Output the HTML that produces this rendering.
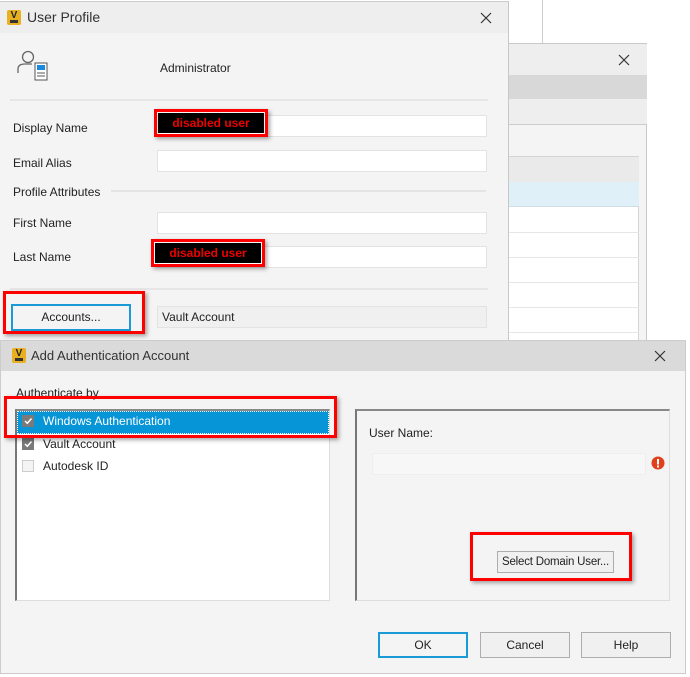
<!DOCTYPE html>
<html><head><meta charset="utf-8"><style>
*{margin:0;padding:0;box-sizing:border-box}
body{width:690px;height:677px;background:#fff;position:relative;overflow:hidden;font-family:"Liberation Sans",sans-serif;font-size:12px;color:#222}
.a{position:absolute}
.inp{position:absolute;background:#fff;border:1px solid #e3e3e3}
.red{position:absolute;border:3px solid #f00;box-shadow:2px 2px 4px rgba(0,0,0,.35)}
.blk{position:absolute;background:#000;color:#e00;font-weight:bold;font-size:12px;text-align:center;line-height:20px}
.btn{position:absolute;background:#f0f0f0;border:1px solid #adadad;text-align:center;font-size:12px;white-space:nowrap}
.logo{position:absolute;width:14px;height:15px;background:#e8b020;border-radius:2px;color:#222;font-size:10px;font-weight:bold;text-align:center;line-height:11px}
.logo:after{content:"";position:absolute;left:3px;bottom:2px;width:8px;height:3px;background:#333}
.x{position:absolute}
.cb{position:absolute;width:12px;height:12px;border:1px solid #ccc;background:#f4f4f4}
.cb.on{background:#7a7a7a;border-color:#7a7a7a}
</style></head><body>
<div class="a" style="left:542px;top:0;width:1px;height:44px;background:#ccc"></div>
<div class="a" style="left:500px;top:43px;width:147px;height:300px;background:#f4f4f4;border:1px solid #c8c8c8">
 <div class="a" style="left:0;top:0;width:146px;height:31px;background:#eee"></div>
 <svg class="x" style="left:117px;top:10px" width="12" height="12"><path d="M1 1L11 11M11 1L1 11" stroke="#333" stroke-width="1.2"/></svg>
 <div class="a" style="left:0;top:31px;width:146px;height:24px;background:#d8d8d8"></div>
 <div class="a" style="left:0;top:55px;width:146px;height:26px;background:#eee;border-bottom:1px solid #ccc"></div>
 <div class="a" style="left:0;top:112px;width:138px;height:190px;background:#fff;border:1px solid #d4d4d4">
  <div class="a" style="left:0;top:0;width:137px;height:25px;background:#eaeaea"></div>
  <div class="a" style="left:0;top:25px;width:137px;height:25px;background:#e0f0f8;border-bottom:1px solid #d0dde5"></div>
  <div class="a" style="left:0;top:75px;width:137px;height:1px;background:#e6e6e6"></div>
  <div class="a" style="left:0;top:100px;width:137px;height:1px;background:#e6e6e6"></div>
  <div class="a" style="left:0;top:125px;width:137px;height:1px;background:#e6e6e6"></div>
  <div class="a" style="left:0;top:150px;width:137px;height:1px;background:#e6e6e6"></div>
  <div class="a" style="left:0;top:175px;width:137px;height:1px;background:#e6e6e6"></div>
 </div>
</div>
<div class="a" style="left:0;top:1px;width:509px;height:345px;background:#f4f4f4;border-right:1px solid #c8c8c8;border-top:1px solid #ccc">
 <div class="a" style="left:0;top:0;width:508px;height:31px;background:#eee"></div>
</div>
<div class="logo" style="left:7px;top:10px">V</div>
<div class="a" style="left:27px;top:9px;font-size:14px;color:#333">User Profile</div>
<svg class="x" style="left:480px;top:12px" width="12" height="12"><path d="M1 1L11 11M11 1L1 11" stroke="#333" stroke-width="1.2"/></svg>
<svg class="a" style="left:17px;top:50px" width="32" height="32"><circle cx="11" cy="7" r="5.5" fill="none" stroke="#666" stroke-width="1.3"/><path d="M1 23 V19 Q1 14 8 14 H15" fill="none" stroke="#666" stroke-width="1.3"/><rect x="18" y="13" width="12" height="17" fill="#fff" stroke="#555"/><rect x="20" y="15" width="8" height="5" fill="#1a8ae0"/><path d="M20 23h8M20 26h8" stroke="#555"/></svg>
<div class="a" style="left:160px;top:61px;font-size:12px">Administrator</div>
<div class="a" style="left:10px;top:99px;width:478px;height:2px;background:#e6e6e6"></div>
<div class="a" style="left:13px;top:121px">Display Name</div>
<div class="inp" style="left:157px;top:115px;width:330px;height:22px"></div>
<div class="red" style="left:154px;top:109px;width:114px;height:28px"></div>
<div class="blk" style="left:158px;top:113px;width:106px;height:20px">disabled user</div>
<div class="a" style="left:13px;top:156px">Email Alias</div>
<div class="inp" style="left:157px;top:150px;width:330px;height:22px"></div>
<div class="a" style="left:13px;top:185px">Profile Attributes</div>
<div class="a" style="left:111px;top:190px;width:375px;height:2px;background:#e4e4e4"></div>
<div class="a" style="left:13px;top:216px">First Name</div>
<div class="inp" style="left:157px;top:212px;width:330px;height:22px"></div>
<div class="a" style="left:13px;top:250px">Last Name</div>
<div class="inp" style="left:157px;top:246px;width:330px;height:22px"></div>
<div class="red" style="left:151px;top:239px;width:114px;height:28px"></div>
<div class="blk" style="left:155px;top:243px;width:106px;height:20px">disabled user</div>
<div class="a" style="left:10px;top:288px;width:478px;height:2px;background:#e6e6e6"></div>
<div class="btn" style="left:11px;top:304px;width:120px;height:27px;border:2px solid #1a9ad6;background:#f4f4f4;line-height:23px">Accounts...</div>
<div class="red" style="left:3px;top:291px;width:142px;height:43px"></div>
<div class="inp" style="left:157px;top:306px;width:330px;height:22px;background:#f0f0f0;padding:3px 4px">Vault Account</div>
<div class="a" style="left:0;top:340px;width:686px;height:334px;background:#f4f4f4;border:1px solid #ccc">
 <div class="a" style="left:0;top:0;width:684px;height:30px;background:#dadada"></div>
</div>
<div class="logo" style="left:12px;top:348px">V</div>
<div class="a" style="left:31px;top:348px;font-size:13px;color:#333">Add Authentication Account</div>
<svg class="x" style="left:654px;top:350px" width="12" height="12"><path d="M1 1L11 11M11 1L1 11" stroke="#333" stroke-width="1.2"/></svg>
<div class="a" style="left:16px;top:386px">Authenticate by</div>
<div class="a" style="left:15px;top:409px;width:315px;height:192px;background:#fff;border:1px solid #ddd;border-left:2px solid #777;border-top:2px solid #888"></div>
<div class="a" style="left:17px;top:411px;width:312px;height:23px;background:#0695d6;border:1px dotted #fff"></div>
<div class="cb on" style="left:22px;top:415px"><svg width="10" height="10" style="position:absolute;left:0;top:0"><path d="M2 5L4.3 7.3L8.5 2.5" stroke="#fff" stroke-width="1.5" fill="none"/></svg></div>
<div class="a" style="left:43px;top:414px;color:#fff;font-size:12px">Windows Authentication</div>
<div class="cb on" style="left:22px;top:438px"><svg width="10" height="10" style="position:absolute;left:0;top:0"><path d="M2 5L4.3 7.3L8.5 2.5" stroke="#fff" stroke-width="1.5" fill="none"/></svg></div>
<div class="a" style="left:43px;top:437px">Vault Account</div>
<div class="cb" style="left:22px;top:460px"></div>
<div class="a" style="left:43px;top:459px">Autodesk ID</div>
<div class="red" style="left:4px;top:396px;width:333px;height:42px"></div>
<div class="a" style="left:355px;top:409px;width:315px;height:192px;border:1px solid #ddd;border-left:2px solid #777;border-top:2px solid #888"></div>
<div class="a" style="left:369px;top:426px">User Name:</div>
<div class="inp" style="left:372px;top:453px;width:274px;height:22px;background:#f7f7f7;border-color:#eee"></div>
<svg class="a" style="left:651px;top:456px" width="14" height="14"><circle cx="7" cy="7" r="6.5" fill="#e0401c"/><rect x="6" y="3" width="2" height="5.5" fill="#fff"/><rect x="6" y="9.5" width="2" height="2" fill="#fff"/></svg>
<div class="btn" style="left:497px;top:551px;width:117px;height:22px;line-height:20px;font-size:11.5px;letter-spacing:-0.2px">Select Domain User...</div>
<div class="red" style="left:470px;top:532px;width:162px;height:49px"></div>
<div class="btn" style="left:378px;top:632px;width:90px;height:26px;border:2px solid #1a9ad6;background:#f4f4f4;line-height:22px">OK</div>
<div class="btn" style="left:480px;top:632px;width:90px;height:26px;line-height:24px">Cancel</div>
<div class="btn" style="left:581px;top:632px;width:90px;height:26px;line-height:24px">Help</div>
</body></html>
